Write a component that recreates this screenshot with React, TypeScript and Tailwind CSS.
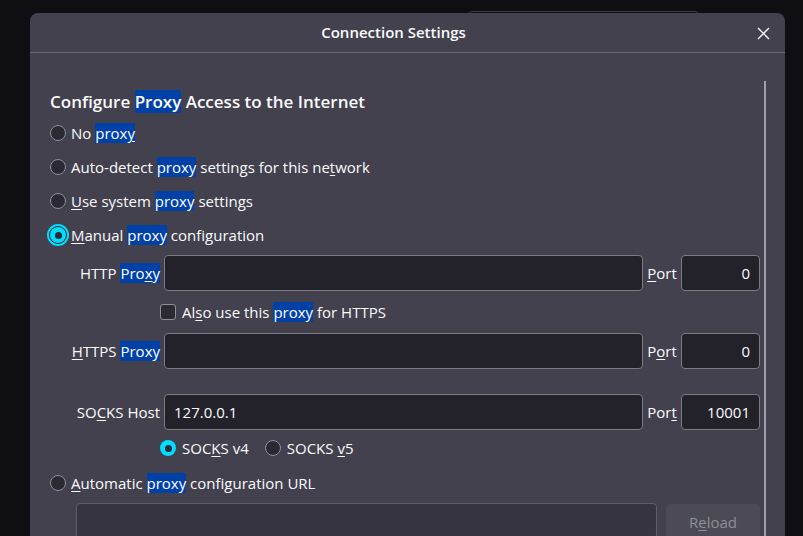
import React from 'react';

const font = { fontFamily: '"Open Sans", "Noto Sans", sans-serif' };

const Hl: React.FC<{ children: React.ReactNode }> = ({ children }) => (
  <span className="bg-[#0041a8] text-white">{children}</span>
);

const Radio: React.FC<{ checked?: boolean; focused?: boolean }> = ({ checked, focused }) =>
  checked ? (
    <span
      className={`w-[16px] h-[16px] rounded-full bg-[#00ddff] flex items-center justify-center shrink-0 ${
        focused ? 'ring-2 ring-[#00ddff] ring-offset-1 ring-offset-[#1c1b22]' : ''
      }`}
    >
      <span className="w-[7px] h-[7px] rounded-full bg-[#2b2a33]" />
    </span>
  ) : (
    <span className="block w-[16px] h-[16px] rounded-full bg-[#2b2a33] border border-[#8f8f9d] shrink-0" />
  );

const TextBox: React.FC<{ value?: string; right?: boolean; className?: string }> = ({ value, right, className }) => (
  <div
    className={`h-[36px] rounded-[4px] bg-[#23222b] border border-[#7c7b84] flex items-center px-[9px] text-[15px] text-[#fbfbfe] ${
      right ? 'justify-end' : ''
    } ${className ?? ''}`}
  >
    {value}
  </div>
);

const ProxyRow: React.FC<{ label: React.ReactNode; port: React.ReactNode; value?: string; portValue: string }> = ({
  label,
  port,
  value,
  portValue,
}) => (
  <div className="flex items-center">
    <div className="w-[100px] text-right pr-[4px] whitespace-nowrap">{label}</div>
    <TextBox value={value} className="flex-1" />
    <div className="w-[38px] text-center">{port}</div>
    <TextBox value={portValue} right className="w-[79px]" />
  </div>
);

export default function App() {
  return (
    <div className="h-screen w-full bg-[#0f0e13] relative overflow-hidden pt-[13px] pl-[30px]" style={font}>
      {/* element behind the dialog */}
      <div className="absolute left-[468px] top-[11px] w-[231px] h-[40px] rounded-[4px] border border-[#3c3b42]" />

      <div className="relative w-[755px] h-[600px] bg-[#42414d] rounded-t-[8px] text-[#fbfbfe] text-[15px]">
        <div className="h-[40px] border-b border-[#6b6a75] flex items-center justify-center relative pr-[28px]">
          <span className="text-[15px] font-semibold">Connection Settings</span>
          <svg className="absolute left-[727px] top-[14px]" width="13" height="13" viewBox="0 0 13 13">
            <path d="M1 1L12 12M12 1L1 12" stroke="#fbfbfe" strokeWidth="1.4" />
          </svg>
        </div>

        <div className="flex">
          <div className="w-[710px] ml-[20px]">
            <h1 className="mt-[37px] text-[17px] leading-[24px] font-semibold">
              Configure <Hl>Proxy</Hl> Access to the Internet
            </h1>

            <div className="mt-[2px]">
              <div className="h-[34px] flex items-center gap-[5px]">
                <Radio />
                <span>
                  No <Hl>prox<u className="underline-offset-2">y</u></Hl>
                </span>
              </div>
              <div className="h-[34px] flex items-center gap-[5px]">
                <Radio />
                <span>
                  Auto-detect <Hl>proxy</Hl> settings for this ne<u className="underline-offset-2">t</u>work
                </span>
              </div>
              <div className="h-[34px] flex items-center gap-[5px]">
                <Radio />
                <span>
                  <u className="underline-offset-2">U</u>se system <Hl>proxy</Hl> settings
                </span>
              </div>
              <div className="h-[34px] flex items-center gap-[5px]">
                <Radio checked focused />
                <span>
                  <u className="underline-offset-2">M</u>anual <Hl>proxy</Hl> configuration
                </span>
              </div>
            </div>

            <div className="ml-[14px] mt-[3px]">
              <ProxyRow
                label={
                  <>
                    HTTP <Hl>Pro<u className="underline-offset-2">x</u>y</Hl>
                  </>
                }
                port={
                  <>
                    <u className="underline-offset-2">P</u>ort
                  </>
                }
                portValue="0"
              />
              <div className="h-[42px] flex items-center gap-[6px] pl-[96px]">
                <span className="w-[16px] h-[16px] rounded-[3px] bg-[#2b2a33] border border-[#8f8f9d]" />
                <span>
                  Al<u className="underline-offset-2">s</u>o use this <Hl>proxy</Hl> for HTTPS
                </span>
              </div>
              <ProxyRow
                label={
                  <>
                    <u className="underline-offset-2">H</u>TTPS <Hl>Proxy</Hl>
                  </>
                }
                port={
                  <>
                    P<u className="underline-offset-2">o</u>rt
                  </>
                }
                portValue="0"
              />
              <div className="h-[25px]" />
              <ProxyRow
                label={
                  <>
                    SO<u className="underline-offset-2">C</u>KS Host
                  </>
                }
                port={
                  <>
                    Por<u className="underline-offset-2">t</u>
                  </>
                }
                value="127.0.0.1"
                portValue="10001"
              />
              <div className="h-[36px] flex items-center pl-[96px]">
                <Radio checked />
                <span className="ml-[6px]">
                  SOC<u className="underline-offset-2">K</u>S v4
                </span>
                <span className="ml-[16px] flex">
                  <Radio />
                </span>
                <span className="ml-[6px]">
                  SOCKS <u className="underline-offset-2">v</u>5
                </span>
              </div>
            </div>

            <div className="h-[34px] flex items-center gap-[5px]">
              <Radio />
              <span>
                <u className="underline-offset-2">A</u>utomatic <Hl>proxy</Hl> configuration URL
              </span>
            </div>

            <div className="flex mt-[3px] ml-[26px] gap-[9px]">
              <div className="flex-1 h-[36px] rounded-[4px] bg-[#36353f] border border-[#5f5e68]" />
              <div className="w-[94px] h-[36px] rounded-[4px] bg-[#4b4a55] flex items-center justify-center text-[#8f8e97] mt-[1px]">
                R<u className="underline-offset-2">e</u>load
              </div>
            </div>
          </div>
          <div className="ml-[4px] mt-[28px] w-[2px] h-[500px] bg-[#a09fa7]" />
        </div>
      </div>
    </div>
  );
}
